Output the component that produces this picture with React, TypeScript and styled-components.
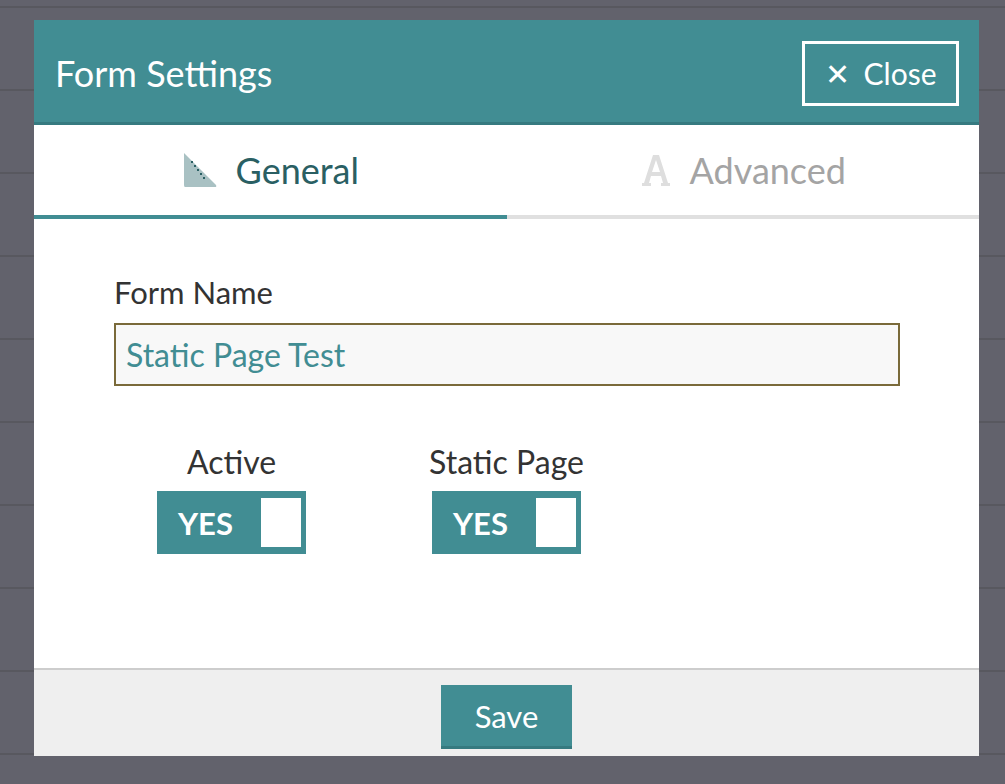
import styled, { createGlobalStyle } from "styled-components";

const Global = createGlobalStyle`
  html, body { margin: 0; padding: 0; }
  body {
    font-family: Lato, "Open Sans", sans-serif;
    background: #62626c;
  }
`;

const Backdrop = styled.div`
  height: 784px;
  padding: 20px 26px 28px 34px;
  box-sizing: border-box;
  background: repeating-linear-gradient(
    to bottom,
    #62626c 0px,
    #62626c 6px,
    #58585f 6px,
    #58585f 8px,
    #62626c 8px,
    #62626c 83px
  );
`;

const Modal = styled.div`
  width: 945px;
  height: 736px;
  display: flex;
  flex-direction: column;
  background: #fff;
`;

const Header = styled.div`
  height: 105px;
  background: #418d93;
  border-bottom: 3px solid #367a80;
  display: flex;
  align-items: center;
  justify-content: space-between;
  padding: 4px 20px 0 21px;
  box-sizing: border-box;
`;

const Title = styled.h1`
  margin: 0;
  font-size: 36px;
  font-weight: 400;
  color: #fff;
`;

const CloseButton = styled.button`
  width: 157px;
  height: 65px;
  border: 3px solid #fff;
  background: transparent;
  color: #fff;
  font-family: inherit;
  font-size: 30px;
  display: flex;
  align-items: center;
  justify-content: center;
  gap: 14px;
`;

const Tabs = styled.div`
  display: flex;
  height: 94px;
`;

const Tab = styled.div<{ active?: boolean }>`
  flex: 1;
  display: flex;
  align-items: center;
  justify-content: center;
  gap: 18px;
  font-size: 36px;
  color: ${({ active }) => (active ? "#2a5f63" : "#a4a4a4")};
  border-bottom: 4px solid ${({ active }) => (active ? "#418d93" : "#e0e0e0")};
`;

const Body = styled.div`
  flex: 1;
  padding: 54px 80px 0;
`;

const Label = styled.div`
  font-size: 31px;
  color: #333;
  margin-bottom: 12px;
`;

const Input = styled.input`
  width: 786px;
  height: 63px;
  box-sizing: border-box;
  border: 2px solid #7a6a3a;
  background: #f8f8f8;
  color: #418d93;
  font-family: inherit;
  font-size: 32px;
  padding: 0 10px;
  outline: none;
`;

const ToggleRow = styled.div`
  display: flex;
  gap: 126px;
  margin-top: 56px;
  padding-left: 43px;
`;

const ToggleGroup = styled.div`
  display: flex;
  flex-direction: column;
  align-items: center;
  width: 149px;
`;

const ToggleLabel = styled.div`
  font-size: 32px;
  color: #333;
  white-space: nowrap;
  margin-bottom: 10px;
`;

const Toggle = styled.div`
  width: 149px;
  height: 63px;
  background: #418d93;
  display: flex;
  align-items: center;
  justify-content: space-between;
  padding: 0 5px 0 21px;
  box-sizing: border-box;
  color: #fff;
  font-weight: 700;
  font-size: 31px;
`;

const Knob = styled.div`
  width: 40px;
  height: 49px;
  background: #fff;
`;

const Footer = styled.div`
  height: 88px;
  background: #efefef;
  border-top: 2px solid #cdcdcd;
  display: flex;
  justify-content: center;
  padding-top: 15px;
  box-sizing: border-box;
`;

const SaveButton = styled.button`
  width: 131px;
  height: 64px;
  background: #418d93;
  border: none;
  border-bottom: 3px solid #367a80;
  color: #fff;
  font-family: inherit;
  font-size: 31px;
`;

const SquareIcon = () => (
  <svg width="36" height="38" viewBox="0 0 36 38">
    <path d="M2 2 L34 34 Q35 36 33 36 L3 36 Q2 36 2 34 Z" fill="#a9c1c3" />
    <g fill="#2a5f63">
      <rect x="9" y="10" width="2" height="2" />
      <rect x="12" y="14" width="2" height="2" />
      <rect x="15" y="18" width="2" height="2" />
      <rect x="18" y="22" width="2" height="2" />
      <rect x="21" y="26" width="2" height="2" />
    </g>
  </svg>
);

const FontIcon = () => (
  <svg width="32" height="34" viewBox="0 0 32 34">
    <path
      d="M13 2 h6 l9 28 h2 v3 h-9 v-3 h2 l-2 -7 h-10 l-2 7 h2 v3 h-9 v-3 h2 Z M12 19 h8 l-4 -12 Z"
      fill="#dedede"
      fillRule="evenodd"
    />
  </svg>
);

const App = () => {
  return (
    <>
      <Global />
      <Backdrop>
        <Modal>
          <Header>
            <Title>Form Settings</Title>
            <CloseButton>
              <span>✕</span>
              <span>Close</span>
            </CloseButton>
          </Header>
          <Tabs>
            <Tab active>
              <SquareIcon />
              General
            </Tab>
            <Tab>
              <FontIcon />
              Advanced
            </Tab>
          </Tabs>
          <Body>
            <Label>Form Name</Label>
            <Input defaultValue="Static Page Test" />
            <ToggleRow>
              <ToggleGroup>
                <ToggleLabel>Active</ToggleLabel>
                <Toggle>
                  YES
                  <Knob />
                </Toggle>
              </ToggleGroup>
              <ToggleGroup>
                <ToggleLabel>Static Page</ToggleLabel>
                <Toggle>
                  YES
                  <Knob />
                </Toggle>
              </ToggleGroup>
            </ToggleRow>
          </Body>
          <Footer>
            <SaveButton>Save</SaveButton>
          </Footer>
        </Modal>
      </Backdrop>
    </>
  );
};

export default App;
